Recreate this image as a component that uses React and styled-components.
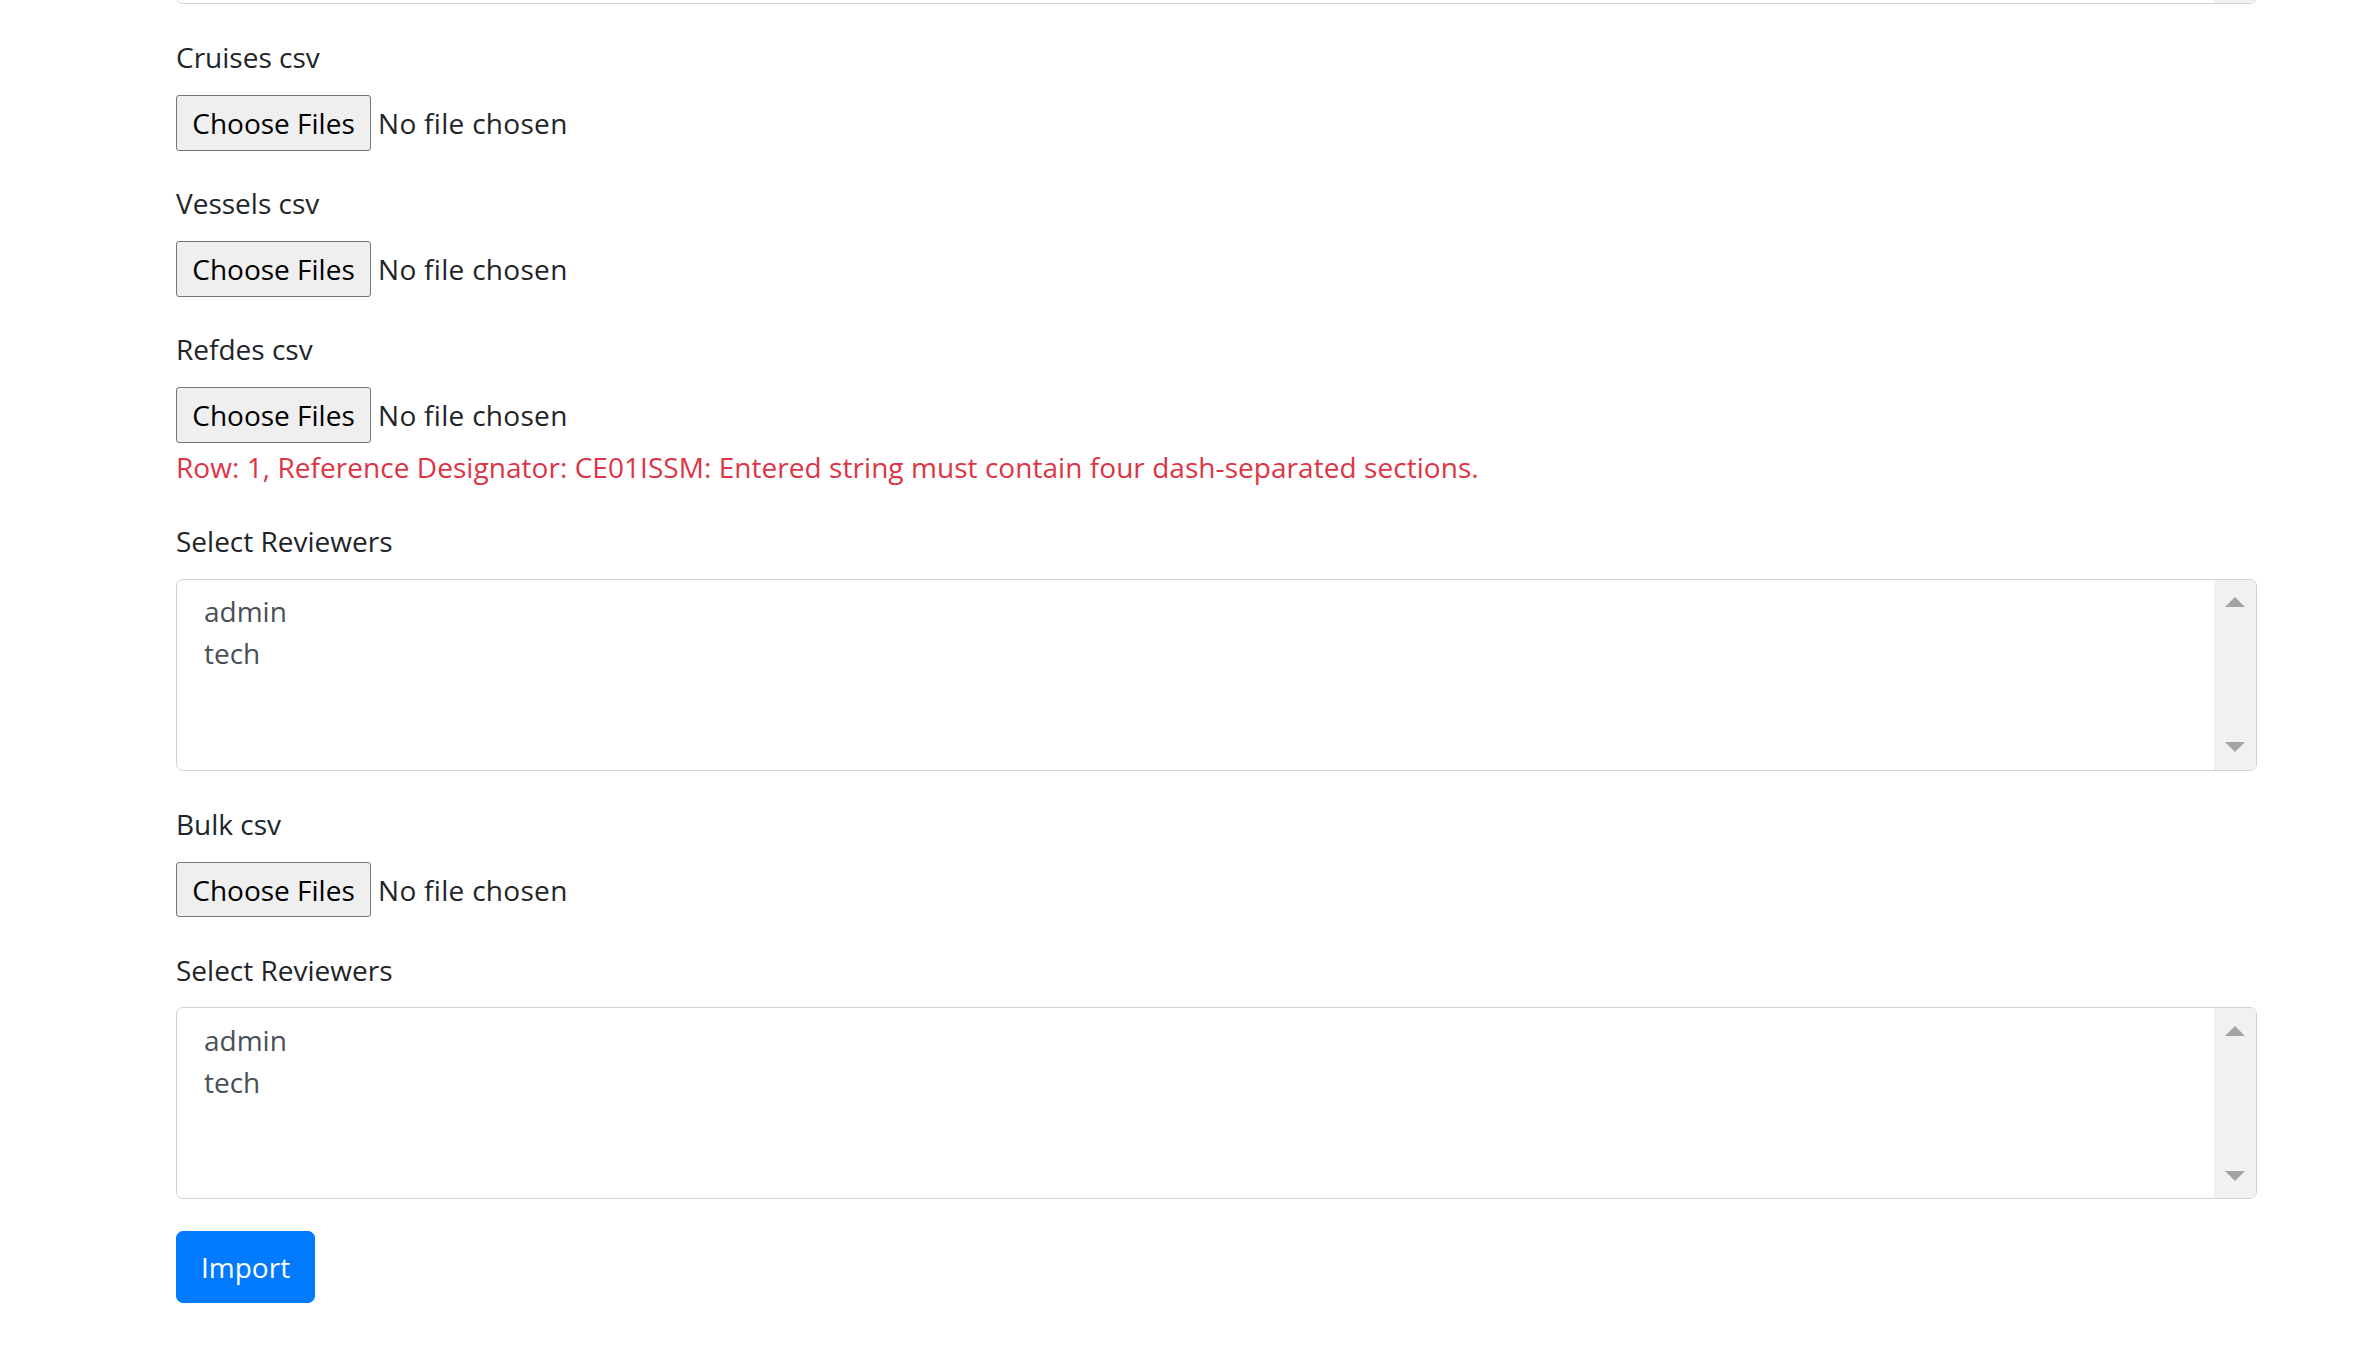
import React from "react";
import styled, { createGlobalStyle } from "styled-components";

const GlobalStyle = createGlobalStyle`
  html, body {
    margin: 0;
    padding: 0;
    background: #ffffff;
  }
  body {
    font-family: "Open Sans", "Noto Sans", sans-serif;
    color: #212529;
  }
`;

const Page = styled.div`
  height: 1350px;
  overflow: hidden;
  background: #ffffff;
`;

const Form = styled.form`
  width: 2081px;
  margin: -190.5px 0 0 176px;
  display: flex;
  flex-direction: column;
`;

const Group = styled.div`
  display: flex;
  flex-direction: column;
  align-items: flex-start;
  margin-bottom: 28px;
`;

const Label = styled.label`
  display: block;
  font-size: 28px;
  line-height: 42px;
  margin-bottom: 14px;
  color: #212529;
`;

const FileRow = styled.div`
  display: flex;
  align-items: center;
  height: 62px;
  gap: 7px;
`;

const FileButton = styled.button`
  box-sizing: border-box;
  width: 195px;
  height: 55.5px;
  padding: 0;
  background: #efefef;
  border: 1px solid #767676;
  border-radius: 3px;
  font-family: "Open Sans", "Noto Sans", sans-serif;
  font-size: 28px;
  line-height: normal;
  color: #000000;
  cursor: default;
`;

const FileStatus = styled.span`
  font-size: 28px;
  line-height: normal;
  letter-spacing: 0.3px;
  color: #212529;
  white-space: nowrap;
`;

const ErrorText = styled.div`
  font-size: 28px;
  line-height: 42px;
  letter-spacing: 0.05px;
  color: #dc3545;
  white-space: nowrap;
  margin-bottom: 4px;
`;

const Listbox = styled.div`
  box-sizing: border-box;
  width: 100%;
  height: 192px;
  margin: 2.5px 0 4px;
  border: 1px solid #ced4da;
  border-radius: 7px;
  overflow: hidden;
  display: flex;
  background: #ffffff;
`;

const Options = styled.div`
  flex: 1;
  padding: 10.5px 21px;
`;

const Option = styled.div`
  font-size: 28px;
  line-height: 42px;
  color: #495057;
  padding-left: 6px;
`;

const ScrollTrack = styled.div`
  width: 42px;
  background: #f1f1f1;
  display: flex;
  flex-direction: column;
  justify-content: space-between;
  align-items: center;
  padding: 17.5px 0 17.5px;
  box-sizing: border-box;
`;

const SubmitButton = styled.button`
  align-self: flex-start;
  box-sizing: border-box;
  height: 72px;
  padding: 0 24px;
  background: #007bff;
  border: 1px solid #007bff;
  border-radius: 7px;
  color: #ffffff;
  font-family: "Open Sans", "Noto Sans", sans-serif;
  font-size: 28px;
  line-height: normal;
`;

const Arrow = ({ down }) => (
  <svg width="20" height="10" viewBox="0 0 20 10">
    <polygon
      points={down ? "0,0 20,0 10,10" : "10,0 20,10 0,10"}
      fill="#a3a3a3"
    />
  </svg>
);

const Reviewers = ({ options }) => (
  <Listbox role="listbox" aria-multiselectable="true">
    <Options>
      {options.map((o) => (
        <Option key={o}>{o}</Option>
      ))}
    </Options>
    <ScrollTrack>
      <Arrow />
      <Arrow down />
    </ScrollTrack>
  </Listbox>
);

const FileField = ({ label, error }) => (
  <Group>
    <Label>{label}</Label>
    <FileRow>
      <FileButton type="button">Choose Files</FileButton>
      <FileStatus>No file chosen</FileStatus>
    </FileRow>
    {error && <ErrorText>{error}</ErrorText>}
  </Group>
);

const ReviewerField = () => (
  <Group>
    <Label>Select Reviewers</Label>
    <Reviewers options={["admin", "tech"]} />
  </Group>
);

export default function App() {
  return (
    <Page>
      <GlobalStyle />
      <Form onSubmit={(e) => e.preventDefault()}>
        <Group>
          <Reviewers options={[]} />
        </Group>
        <FileField label="Cruises csv" />
        <FileField label="Vessels csv" />
        <FileField
          label="Refdes csv"
          error="Row: 1, Reference Designator: CE01ISSM: Entered string must contain four dash-separated sections."
        />
        <ReviewerField />
        <FileField label="Bulk csv" />
        <ReviewerField />
        <SubmitButton type="submit">Import</SubmitButton>
      </Form>
    </Page>
  );
}
